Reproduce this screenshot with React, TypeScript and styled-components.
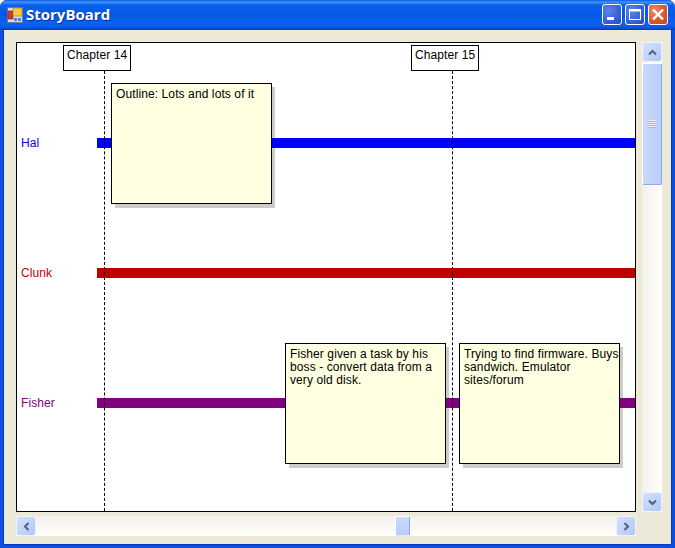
import React from 'react'
import styled, { createGlobalStyle } from 'styled-components'

const GlobalStyle = createGlobalStyle`
  html, body {
    margin: 0;
    padding: 0;
    background: #fff;
  }
`

// coordinates are relative to the inside of the canvas border
const tracks = [
  { name: 'Hal', color: '#0000ff', top: 95 },
  { name: 'Clunk', color: '#c00000', top: 225 },
  { name: 'Fisher', color: '#800080', top: 355 },
]

const chapters = [
  { title: 'Chapter 14', x: 87 },
  { title: 'Chapter 15', x: 435 },
]

const notes = [
  { text: 'Outline: Lots and lots of it', x: 94, y: 40 },
  { text: 'Fisher given a task by his boss - convert data from a very old disk.', x: 268, y: 300 },
  { text: 'Trying to find firmware. Buys sandwich. Emulator sites/forum', x: 442, y: 300 },
]

export default function App() {
  return (
    <>
      <GlobalStyle />
      <Window>
        <TitleBar>
          <AppIcon width="16" height="16" viewBox="0 0 16 16">
            <rect x="0.5" y="0.5" width="15" height="15" fill="#d8dce8" stroke="#6a7a9c" />
            <rect x="1" y="4" width="5" height="8" fill="#d8352a" stroke="#7a2020" strokeWidth="0.6" />
            <rect x="6" y="1" width="9" height="8" fill="#f7c93e" stroke="#a07a18" strokeWidth="0.6" />
            <rect x="7" y="11" width="3" height="3" fill="#4a86d8" />
            <rect x="11" y="11" width="3" height="3" fill="#4a86d8" />
          </AppIcon>
          <Title>StoryBoard</Title>
          <Controls>
            <CaptionButton>
              <svg width="20" height="21" viewBox="0 0 20 21">
                <rect x="5" y="13" width="7" height="3" fill="#fff" />
              </svg>
            </CaptionButton>
            <CaptionButton>
              <svg width="20" height="21" viewBox="0 0 20 21">
                <rect x="4.5" y="5.5" width="11" height="10" fill="none" stroke="#fff" />
                <rect x="4" y="5" width="12" height="2.5" fill="#fff" />
              </svg>
            </CaptionButton>
            <CloseButton>
              <svg width="20" height="21" viewBox="0 0 20 21">
                <path d="M5 5.5 L15 15.5 M15 5.5 L5 15.5" stroke="#fff" strokeWidth="2.4" />
              </svg>
            </CloseButton>
          </Controls>
        </TitleBar>
        <Body>
          <Canvas>
            {/* the bars paint over the note shadows, so the shadows go first */}
            {notes.map((n) => (
              <NoteShadow key={n.x} $x={n.x} $y={n.y} />
            ))}
            {tracks.map((t) => (
              <React.Fragment key={t.name}>
                <TrackLabel $color={t.color} $top={t.top}>{t.name}</TrackLabel>
                <TrackBar $color={t.color} $top={t.top} />
              </React.Fragment>
            ))}
            {chapters.map((c) => (
              <React.Fragment key={c.title}>
                <ChapterLine $x={c.x} />
                <ChapterBox $x={c.x}>{c.title}</ChapterBox>
              </React.Fragment>
            ))}
            {notes.map((n) => (
              <Note key={n.x} $x={n.x} $y={n.y}>{n.text}</Note>
            ))}
          </Canvas>
          <VScroll>
            <ScrollButton>
              <svg width="9" height="7" viewBox="0 0 9 7">
                <path d="M1 5.5 L4.5 2 L8 5.5" fill="none" stroke="#4d6185" strokeWidth="2" />
              </svg>
            </ScrollButton>
            <VThumb>
              <Grip />
            </VThumb>
            <Spacer />
            <ScrollButton>
              <svg width="9" height="7" viewBox="0 0 9 7">
                <path d="M1 1.5 L4.5 5 L8 1.5" fill="none" stroke="#4d6185" strokeWidth="2" />
              </svg>
            </ScrollButton>
          </VScroll>
          <HScroll>
            <ScrollButton>
              <svg width="7" height="9" viewBox="0 0 7 9">
                <path d="M5.5 1 L2 4.5 L5.5 8" fill="none" stroke="#4d6185" strokeWidth="2" />
              </svg>
            </ScrollButton>
            <HThumb />
            <ScrollButton>
              <svg width="7" height="9" viewBox="0 0 7 9">
                <path d="M1.5 1 L5 4.5 L1.5 8" fill="none" stroke="#4d6185" strokeWidth="2" />
              </svg>
            </ScrollButton>
          </HScroll>
        </Body>
      </Window>
    </>
  )
}

const Window = styled.div`
  width: 675px;
  height: 548px;
  box-sizing: border-box;
  display: flex;
  flex-direction: column;
  background: #0a4fe0;
  border-radius: 7px 7px 0 0;
  overflow: hidden;
  font-family: "Liberation Sans", Arial, sans-serif;
`

const TitleBar = styled.div`
  height: 30px;
  flex-shrink: 0;
  display: flex;
  align-items: center;
  padding: 0 7px;
  box-sizing: border-box;
  background: linear-gradient(
    to bottom,
    #0a58e0 0,
    #3f94ff 2px,
    #0a62ec 5px,
    #0458e4 14px,
    #0a62f0 24px,
    #0a5ae6 27px,
    #033cc0 30px
  );
`

const AppIcon = styled.svg`
  flex-shrink: 0;
  margin-top: -1px;
`

const Title = styled.div`
  margin-left: 3px;
  margin-top: -2px;
  font-family: "Open Sans", "Liberation Sans", sans-serif;
  font-weight: 700;
  font-size: 15px;
  color: #fff;
  text-shadow: 1px 1px 0 #0a2f9c;
`

const Controls = styled.div`
  margin-left: auto;
  display: flex;
  gap: 3px;
  padding-bottom: 1px;
`

const CaptionButton = styled.div`
  width: 20px;
  height: 21px;
  box-sizing: border-box;
  display: flex;
  align-items: center;
  justify-content: center;
  border: 1px solid #fff;
  border-radius: 3px;
  background: radial-gradient(circle at 30% 30%, #5c86ea 0, #3a62da 55%, #2c48c0 100%);

  svg {
    flex-shrink: 0;
  }
`

const CloseButton = styled(CaptionButton)`
  background: radial-gradient(circle at 30% 30%, #ec8a68 0, #dc5a30 55%, #c8401c 100%);
`

const Body = styled.div`
  flex: 1;
  margin: 0 4px 4px;
  padding: 12px 9px 0 12px;
  background: #ece9d8;
  display: grid;
  grid-template-columns: 620px 20px;
  grid-template-rows: 470px 20px;
  column-gap: 6px;
  row-gap: 4px;
  align-content: start;
  box-shadow: -1px 0 0 #0838c0, 1px 0 0 #0838c0, 0 1px 0 #0838c0;
`

const Canvas = styled.div`
  position: relative;
  box-sizing: border-box;
  border: 1px solid #000;
  background: #fff;
  overflow: hidden;
  font-size: 12px;
  letter-spacing: 0.1px;
  color: #000;
`

const TrackLabel = styled.div<{ $color: string; $top: number }>`
  position: absolute;
  left: 4px;
  top: ${(p) => p.$top - 2}px;
  line-height: 14px;
  color: ${(p) => p.$color};
`

const TrackBar = styled.div<{ $color: string; $top: number }>`
  position: absolute;
  left: 80px;
  right: 0;
  top: ${(p) => p.$top}px;
  height: 10px;
  background: ${(p) => p.$color};
`

const ChapterLine = styled.div<{ $x: number }>`
  position: absolute;
  left: ${(p) => p.$x}px;
  top: 28px;
  bottom: 0;
  width: 0;
  border-left: 1px dashed #000;
`

const ChapterBox = styled.div<{ $x: number }>`
  position: absolute;
  left: ${(p) => p.$x - 41}px;
  top: 2px;
  width: 68px;
  height: 26px;
  box-sizing: border-box;
  border: 1px solid #000;
  background: #fff;
  padding: 2px 0 0 3px;
  line-height: 14px;
  white-space: nowrap;
`

const NoteShadow = styled.div<{ $x: number; $y: number }>`
  position: absolute;
  left: ${(p) => p.$x + 4}px;
  top: ${(p) => p.$y + 4}px;
  width: 160px;
  height: 121px;
  background: #cccccc;
`

const Note = styled.div<{ $x: number; $y: number }>`
  position: absolute;
  left: ${(p) => p.$x}px;
  top: ${(p) => p.$y}px;
  width: 161px;
  height: 121px;
  box-sizing: border-box;
  border: 1px solid #000;
  background: #ffffe1;
  padding: 4px 0 0 4px;
  line-height: 13px;
`

const VScroll = styled.div`
  display: flex;
  flex-direction: column;
  gap: 1px;
  box-sizing: border-box;
  background: linear-gradient(to right, #f3f1ec, #fefefb);
`

const Spacer = styled.div`
  flex: 1;
`

const HScroll = styled.div`
  grid-column: 1;
  position: relative;
  display: flex;
  justify-content: space-between;
  background: linear-gradient(to bottom, #f3f1ec, #fefefb);
`

const ScrollButton = styled.div`
  width: 20px;
  height: 20px;
  flex-shrink: 0;
  box-sizing: border-box;
  display: flex;
  align-items: center;
  justify-content: center;
  border: 1px solid #eef3fd;
  border-radius: 3px;
  background: linear-gradient(135deg, #d6e2fb, #b0c6f6);
`

const VThumb = styled.div`
  height: 122px;
  flex-shrink: 0;
  box-sizing: border-box;
  display: flex;
  align-items: center;
  justify-content: center;
  border: 1px solid #fff;
  border-right-color: #8ea9e6;
  border-bottom-color: #8ea9e6;
  border-radius: 2px;
  background: linear-gradient(to right, #cbdafb, #b9cdf8);
`

const Grip = styled.div`
  width: 7px;
  height: 8px;
  background: repeating-linear-gradient(to bottom, #eef3fe 0 1px, #9cb4ea 1px 2px);
`

const HThumb = styled.div`
  position: absolute;
  left: 379px;
  top: 0;
  width: 15px;
  height: 20px;
  box-sizing: border-box;
  border: 1px solid #fff;
  border-right-color: #8ea9e6;
  border-bottom-color: #dfe7fa;
  border-radius: 2px;
  background: linear-gradient(to bottom, #cbdafb, #b9cdf8);
`
